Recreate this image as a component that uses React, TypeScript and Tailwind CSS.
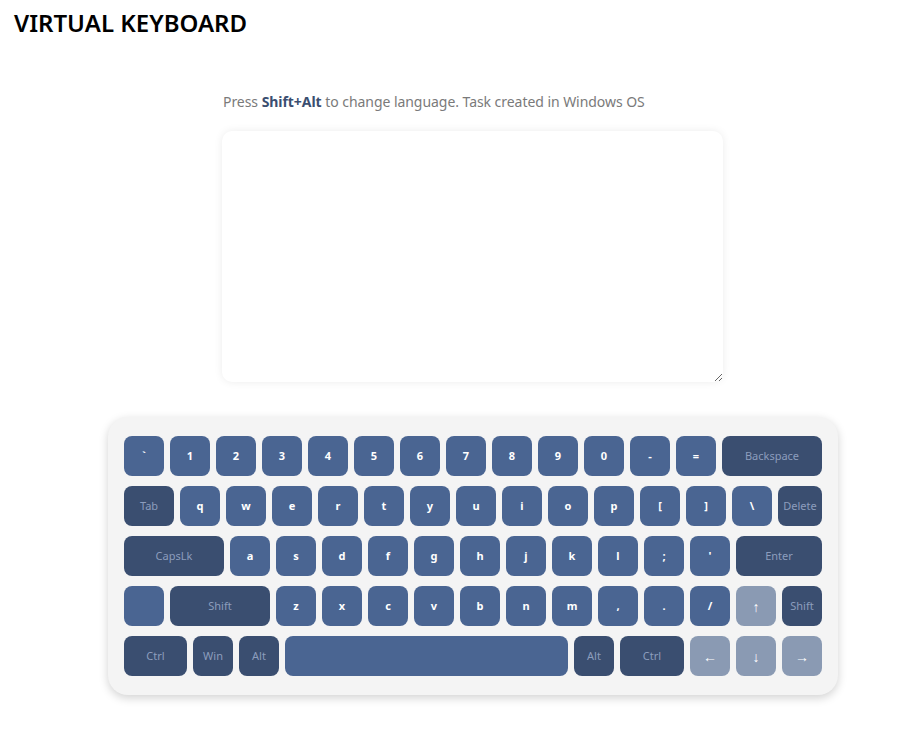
import React from "react";

type K = { l: string; w: number; t: "n" | "d" | "a" };

const n = (l: string): K => ({ l, w: 40, t: "n" });
const d = (l: string, w: number): K => ({ l, w, t: "d" });
const a = (l: string): K => ({ l, w: 40, t: "a" });

const rows: K[][] = [
  [..."`1234567890-=".split("").map(n), d("Backspace", 100)],
  [d("Tab", 50), ..."qwertyuiop[]\\".split("").map(n), d("Delete", 44)],
  [d("CapsLk", 100), ..."asdfghjkl;'".split("").map(n), d("Enter", 86)],
  [n(""), d("Shift", 100), ..."zxcvbnm,./".split("").map(n), a("↑"), d("Shift", 40)],
  [
    d("Ctrl", 63),
    d("Win", 40),
    d("Alt", 40),
    { l: "", w: 283, t: "n" },
    d("Alt", 40),
    d("Ctrl", 64),
    a("←"),
    a("↓"),
    a("→"),
  ],
];

function Key({ k }: { k: K }) {
  const cls =
    k.t === "n"
      ? "bg-[#4a6592] text-white font-bold text-[11px]"
      : k.t === "d"
      ? "bg-[#3a4e70] text-[#8c9dbd] text-[11px]"
      : "bg-[#8a9ab3] text-white font-bold text-[14px]";
  return (
    <div
      className={`h-10 rounded-[8px] flex items-center justify-center shrink-0 ${cls}`}
      style={{ width: k.w }}
    >
      {k.l}
    </div>
  );
}

export default function App() {
  return (
    <div className="min-h-[749px] bg-white font-['Noto_Sans',sans-serif]">
      <h1 className="pt-[7px] pl-[14px] text-[24px] leading-[32px] font-semibold text-black">
        VIRTUAL KEYBOARD
      </h1>
      <div className="pl-[108px] pt-[53px]">
        <div className="w-[730px] flex flex-col">
          <div className="w-[501px] ml-[114px]">
            <p className="text-[14px] leading-[20px] text-[#7a7a7a] pl-px tracking-[-0.05px]">
              Press <span className="font-bold text-[#3a4e70]">Shift+Alt</span> to change language. Task
              created in Windows OS
            </p>
            <textarea className="mt-[19px] block w-[501px] h-[251px] rounded-[10px] bg-white shadow-[0_0_8px_rgba(0,0,0,0.08)] outline-none" />
          </div>
          <div className="mt-[35px] w-[730px] rounded-[20px] bg-[#f4f4f4] shadow-[0_3px_10px_rgba(0,0,0,0.18)] px-4 py-[19px] flex flex-col gap-[10px]">
            {rows.map((r, i) => (
              <div key={i} className="flex gap-[6px]">
                {r.map((k, j) => (
                  <Key key={j} k={k} />
                ))}
              </div>
            ))}
          </div>
        </div>
      </div>
    </div>
  );
}
